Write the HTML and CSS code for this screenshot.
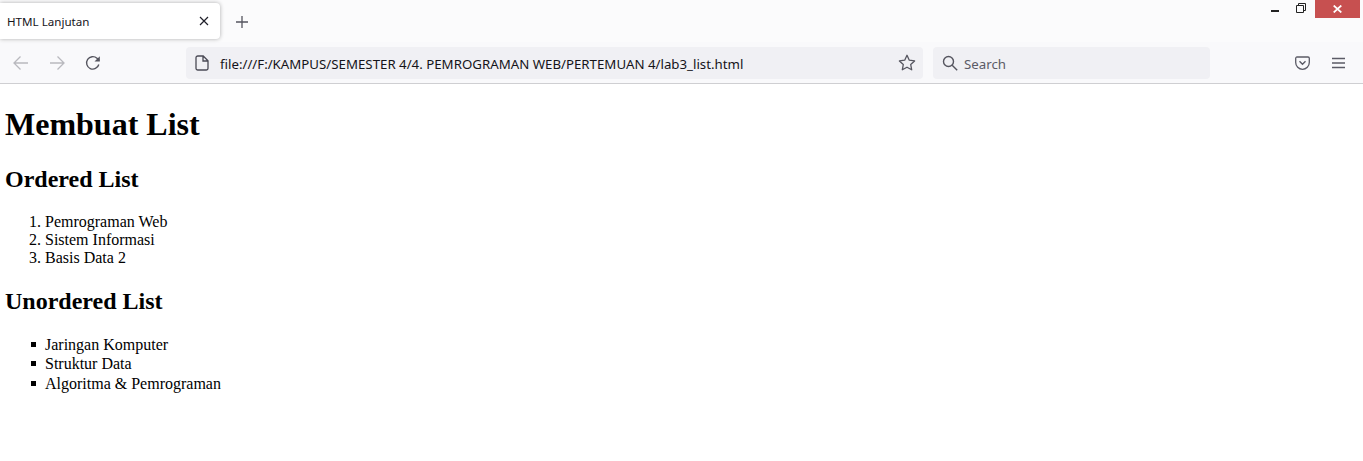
FILE: index.html
```html
<!DOCTYPE html>
<html lang="id">
<head>
<meta charset="utf-8">
<title>HTML Lanjutan</title>
<link rel="stylesheet" href="styles.css">
</head>
<body>
<header class="browser">
  <div class="tabbar">
    <div class="tab">
      <span class="tab-title">HTML Lanjutan</span>
      <svg class="tab-close" width="10" height="10" viewBox="0 0 10 10"><path d="M1 1l8 8M9 1l-8 8" stroke="#20202a" stroke-width="1.2" fill="none"/></svg>
    </div>
    <svg class="new-tab" width="14" height="14" viewBox="0 0 14 14"><path d="M7 1v12M1 7h12" stroke="#55555f" stroke-width="1.3" fill="none"/></svg>
    <div class="window-controls">
      <svg class="win-min" width="8" height="2" viewBox="0 0 8 2"><path d="M0 1h8" stroke="#222" stroke-width="2" fill="none"/></svg>
      <svg class="win-restore" width="10" height="10" viewBox="0 0 10 10"><path d="M.5 2.500h7v7h-7zM2.500 2.500v-2h7v7h-2" stroke="#222" stroke-width="1" fill="none"/></svg>
      <div class="win-close"><svg width="9" height="8" viewBox="0 0 9 8"><path d="M.7 .5l7.600 7M8.300 .5l-7.600 7" stroke="#fff" stroke-width="1.700" fill="none"/></svg></div>
    </div>
  </div>
  <div class="toolbar">
    <svg class="nav nav-back" width="18" height="16" viewBox="0 0 18 16"><path d="M16 8H2M8.500 1.500L2 8l6.500 6.500" stroke="#b9b9be" stroke-width="1.300" fill="none"/></svg>
    <svg class="nav nav-forward" width="18" height="16" viewBox="0 0 18 16"><path d="M2 8h14M9.500 1.500L16 8l-6.500 6.500" stroke="#b9b9be" stroke-width="1.300" fill="none"/></svg>
    <svg class="nav nav-reload" width="16" height="16" viewBox="0 0 16 16"><path d="M13.800 9.500A6.200 6.200 0 1 1 12 3.300L14.200 5.500" stroke="#55555f" stroke-width="1.400" fill="none"/><path d="M14.800 1.200v5.300H9.500z" fill="#55555f"/></svg>
    <div class="urlbar">
      <svg class="page-icon" width="14" height="16" viewBox="0 0 14 16"><path d="M2.800 1h5.400L13 5.800v7.400A1.800 1.800 0 0 1 11.200 15H2.800A1.800 1.800 0 0 1 1 13.200V2.800A1.800 1.800 0 0 1 2.800 1zM8 1v5h5" stroke="#4a4a55" stroke-width="1.300" fill="none"/></svg>
      <span class="url">file:///F:/KAMPUS/SEMESTER 4/4. PEMROGRAMAN WEB/PERTEMUAN 4/lab3_list.html</span>
      <svg class="star" width="18" height="17" viewBox="0 0 18 17"><path d="M9 1.300l2.300 4.900 5.300.7-3.900 3.600 1 5.300L9 13.200l-4.700 2.600 1-5.300L1.400 6.900l5.300-.7z" stroke="#55555f" stroke-width="1.300" stroke-linejoin="round" fill="none"/></svg>
    </div>
    <div class="searchbar">
      <svg width="16" height="16" viewBox="0 0 16 16"><circle cx="6.500" cy="6.500" r="5" stroke="#55555f" stroke-width="1.400" fill="none"/><path d="M10.200 10.200l5 5" stroke="#55555f" stroke-width="1.400" fill="none"/></svg>
      <span class="search-text">Search</span>
    </div>
    <svg class="pocket" width="15" height="14" viewBox="0 0 15 14"><path d="M2 1h11a1.300 1.300 0 0 1 1.300 1.300V6.500a6.800 6.800 0 0 1-13.600 0V2.300A1.300 1.300 0 0 1 2 1z" stroke="#5b5b66" stroke-width="1.300" fill="none"/><path d="M4.500 5.200l3 3 3-3" stroke="#5b5b66" stroke-width="1.400" fill="none"/></svg>
    <svg class="menu" width="13" height="12" viewBox="0 0 13 12"><path d="M0 1.500h13M0 6h13M0 10.500h13" stroke="#5b5b66" stroke-width="1.300" fill="none"/></svg>
  </div>
</header>
<main class="content">
  <h1>Membuat List</h1>
  <h2>Ordered List</h2>
  <ol>
    <li>Pemrograman Web</li>
    <li>Sistem Informasi</li>
    <li>Basis Data 2</li>
  </ol>
  <h2 class="second">Unordered List</h2>
  <ul>
    <li>Jaringan Komputer</li>
    <li>Struktur Data</li>
    <li>Algoritma &amp; Pemrograman</li>
  </ul>
</main>
</body>
</html>
```
FILE: styles.css
```css
html, body {
  margin: 0;
  padding: 0;
  background: #fff;
  overflow: hidden;
}
body {
  font-family: "Liberation Serif", "Times New Roman", serif;
  color: #000;
}
.browser {
  height: 84px;
  box-sizing: border-box;
  border-bottom: 1px solid #cfcfd2;
  background: #f9f9fb;
  font-family: "Noto Sans", "Open Sans", sans-serif;
}
.tabbar {
  height: 42px;
  box-sizing: border-box;
  padding-top: 3px;
  display: flex;
  align-items: flex-start;
  background: #fbfbfc;
}
.tab {
  width: 220px;
  height: 36px;
  box-sizing: border-box;
  padding: 0 11px 0 7px;
  display: flex;
  align-items: center;
  justify-content: space-between;
  background: #fff;
  border-radius: 0 4px 4px 0;
  box-shadow: 0 0 4px rgba(0, 0, 0, 0.32);
}
.tab-title {
  font-size: 11.600px;
  color: #15141a;
}
.new-tab {
  margin: 12px 0 0 15px;
}
.window-controls {
  margin-left: auto;
  margin-top: -3px;
  height: 18px;
  padding-right: 3px;
  display: flex;
  align-items: flex-start;
}
.win-min {
  margin-top: 10px;
}
.win-restore {
  margin: 3px 0 0 17px;
}
.win-close {
  margin-left: 9px;
  width: 45px;
  height: 18px;
  background: #c75050;
  display: flex;
  align-items: center;
  justify-content: center;
}
.toolbar {
  height: 41px;
  display: flex;
  align-items: center;
  padding: 0 18px 0 12px;
}
.nav {
  flex: none;
}
.nav-forward {
  margin-left: 18px;
}
.nav-reload {
  margin-left: 19px;
}
.urlbar {
  margin-left: 85px;
  width: 737px;
  height: 32px;
  box-sizing: border-box;
  padding: 0 7px 0 9px;
  display: flex;
  align-items: center;
  background: #f0f0f4;
  border-radius: 4px;
  flex: none;
}
.url {
  margin-left: 11px;
  padding-top: 2px;
  font-size: 13.280px;
  color: #15141a;
  white-space: nowrap;
}
.star {
  margin-left: auto;
}
.searchbar {
  margin-left: 10px;
  width: 277px;
  height: 32px;
  box-sizing: border-box;
  padding: 0 9px;
  display: flex;
  align-items: center;
  gap: 6px;
  background: #f0f0f4;
  border-radius: 4px;
  flex: none;
}
.search-text {
  padding-top: 2px;
  font-size: 13.280px;
  color: #5b5b66;
}
.pocket {
  margin-left: auto;
}
.menu {
  margin-left: 22px;
}
.content {
  padding: 0 5px;
}
h1 {
  font-size: 32px;
  line-height: 37px;
  margin: 22px 0 0;
}
h2 {
  font-size: 24px;
  line-height: 27px;
  margin: 23px 0 0;
}
h2.second {
  margin-top: 21px;
}
ol, ul {
  margin: 20px 0 0;
  padding-left: 40px;
  font-size: 16px;
  line-height: 18px;
}
ul {
  list-style: none;
  line-height: 19.400px;
}
ul li::before {
  content: "";
  display: inline-block;
  width: 5px;
  height: 5px;
  margin: 0 8px 0 -13px;
  vertical-align: 3px;
  background: #000;
  transform: translateX(-1px);
}
```
